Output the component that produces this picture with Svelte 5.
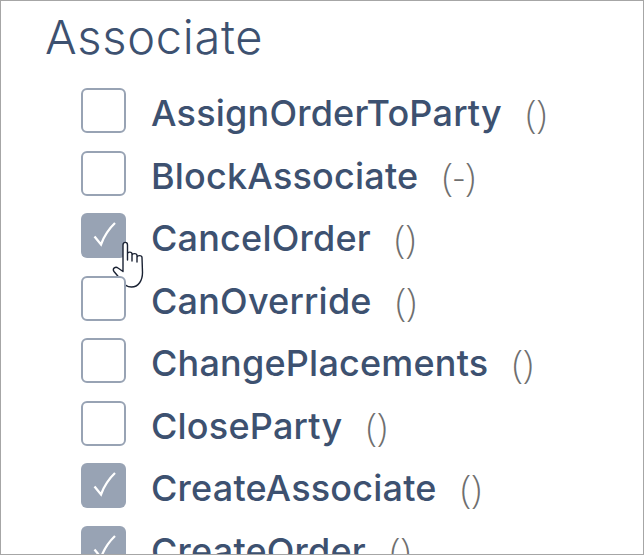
<script lang="ts">
  interface Permission {
    name: string;
    scope: string;
    checked: boolean;
  }

  const permissions: Permission[] = [
    { name: 'AssignOrderToParty', scope: '()', checked: false },
    { name: 'BlockAssociate', scope: '(-)', checked: false },
    { name: 'CancelOrder', scope: '()', checked: true },
    { name: 'CanOverride', scope: '()', checked: false },
    { name: 'ChangePlacements', scope: '()', checked: false },
    { name: 'CloseParty', scope: '()', checked: false },
    { name: 'CreateAssociate', scope: '()', checked: true },
    { name: 'CreateOrder', scope: '()', checked: true },
  ];
</script>

<main>
  <h1>Associate</h1>
  <ul>
    {#each permissions as item, i (item.name)}
      <li>
        <span class="box" class:checked={item.checked}>
          {#if item.checked}
            <svg viewBox="0 0 45 45" width="45" height="45" aria-hidden="true">
              <path d="M13.500 23.500 L20 31.500 Q24.500 19 34 10" fill="none" stroke="#fff" stroke-width="2.300" />
            </svg>
          {/if}
          {#if i === 2}
            <svg class="cursor" viewBox="0 0 36 50" width="36" height="50" aria-hidden="true">
              <path
                d="M12 5c0-3.500 4.500-3.500 4.500 0V20V14c0-2.500 4.500-2.500 4.500 0v7V15.500c0-2.500 5-2.500 5 0V22V17.500c0-2.500 5-2.500 5 0l.5 15c0 8-4 14.500-11 14.500-5 0-7-2.500-9.500-6L3 31.500c-2-3 1.500-5.500 4-3.500l5 3.500z"
                fill="#fff"
                stroke="#1a2233"
                stroke-width="1.400"
                stroke-linejoin="round"
              />
            </svg>
          {/if}
        </span>
        <span class="name">{item.name}</span>
        <span class="scope">{item.scope}</span>
      </li>
    {/each}
  </ul>
</main>

<style>
  :global(body) {
    margin: 0;
    background: #fff;
  }

  main {
    box-sizing: border-box;
    width: 644px;
    height: 555px;
    border: 1px solid #a6a6a6;
    overflow: hidden;
    padding: 6px 0 0 44px;
    font-family: Inter, 'Noto Sans', sans-serif;
    color: #3d5170;
  }

  h1 {
    margin: 0 0 21px;
    font-size: 47px;
    line-height: 60px;
    font-weight: 300;
    letter-spacing: 0.7px;
  }

  ul {
    list-style: none;
    margin: 0;
    padding: 0 0 0 36px;
    display: flex;
    flex-direction: column;
    gap: 17.500px;
  }

  li {
    display: flex;
    align-items: center;
    height: 45px;
  }

  .box {
    position: relative;
    box-sizing: border-box;
    flex: none;
    width: 45px;
    height: 45px;
    margin-right: 25px;
    border: 2px solid #98a3b4;
    border-radius: 6px;
    background: #fff;
  }

  .box.checked {
    border: none;
    background: #98a3b4;
  }

  .box svg {
    display: block;
  }

  .box .cursor {
    position: absolute;
    left: 30px;
    top: 27px;
  }

  .name {
    padding-top: 5px;
    font-size: 36px;
    line-height: 44px;
    font-weight: 500;
    letter-spacing: 0.2px;
  }

  .scope {
    margin-left: 24px;
    padding-top: 5px;
    font-family: 'Open Sans', sans-serif;
    font-size: 38px;
    line-height: 44px;
    font-weight: 300;
    color: #6f6f6f;
  }
</style>
